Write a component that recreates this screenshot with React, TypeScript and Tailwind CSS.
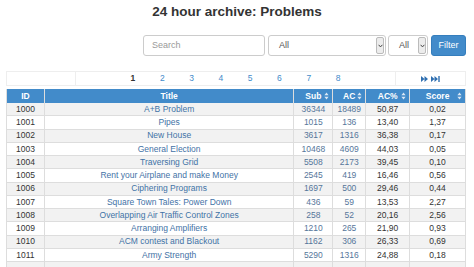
import React from "react";

type Row = [string, string, string, string, string, string];

const rows: Row[] = [
  ["1000", "A+B Problem", "36344", "18489", "50,87", "0,02"],
  ["1001", "Pipes", "1015", "136", "13,40", "1,37"],
  ["1002", "New House", "3617", "1316", "36,38", "0,17"],
  ["1003", "General Election", "10468", "4609", "44,03", "0,05"],
  ["1004", "Traversing Grid", "5508", "2173", "39,45", "0,10"],
  ["1005", "Rent your Airplane and make Money", "2545", "419", "16,46", "0,56"],
  ["1006", "Ciphering Programs", "1697", "500", "29,46", "0,44"],
  ["1007", "Square Town Tales: Power Down", "436", "59", "13,53", "2,27"],
  ["1008", "Overlapping Air Traffic Control Zones", "258", "52", "20,16", "2,56"],
  ["1009", "Arranging Amplifiers", "1210", "265", "21,90", "0,93"],
  ["1010", "ACM contest and Blackout", "1162", "306", "26,33", "0,69"],
  ["1011", "Army Strength", "5290", "1316", "24,88", "0,18"],
  ["1012", "", "", "", "", ""],
];

function SortIcon() {
  return (
    <svg width="5" height="8" viewBox="0 0 5 8" className="absolute right-[3px] top-1/2 -translate-y-1/2" aria-hidden="true">
      <path d="M2.5 0.5 L4.6 3.2 L0.4 3.2 Z" fill="#dbe8f5" />
      <path d="M2.5 7.5 L4.6 4.8 L0.4 4.8 Z" fill="#dbe8f5" />
    </svg>
  );
}

function SelectBox({ width, label }: { width: string; label: string }) {
  return (
    <div className={`${width} flex h-[21px] items-center rounded-[3px] border border-[#ccc] bg-white`}>
      <span className="flex-1 pl-[10px] text-[9px] text-[#555]">{label}</span>
      <span className="mr-[1px] flex h-[17px] w-[8px] items-center justify-center rounded-[2px] border border-[#bbb] bg-[#ececec]">
        <svg width="5" height="4" viewBox="0 0 5 4" aria-hidden="true">
          <path d="M0.6 0.8 L2.5 2.9 L4.4 0.8" fill="none" stroke="#444" strokeWidth="1" />
        </svg>
      </span>
    </div>
  );
}

export default function App() {
  const cell = "flex items-center justify-center border-r border-[#ddd] h-full";
  return (
    <div className="h-[267px] w-[474px] overflow-hidden bg-white font-['Liberation_Sans',Arial,sans-serif] text-[#333]">
      <h1 className="mt-[4px] text-center text-[13.5px] font-bold leading-[16px] text-[#333]">
        24 hour archive: Problems
      </h1>

      <div className="mt-[15px] flex justify-end gap-[2px] pr-[8px]">
        <div className="mr-[1px] flex h-[21px] w-[122px] items-center rounded-[3px] border border-[#ccc] bg-white pl-[8px] text-[9px] text-[#999]">
          Search
        </div>
        <SelectBox width="w-[118px]" label="All" />
        <SelectBox width="w-[40px]" label="All" />
        <button className="ml-[1px] h-[21px] w-[35px] rounded-[3px] border border-[#357ebd] bg-[#428bca] text-[9px] text-white">
          Filter
        </button>
      </div>

      <div className="mx-[6px] mt-[15px] flex h-[15px] w-[460px] border border-[#eee] text-[8.5px]">
        <div className="w-[69px] border-r border-[#eee]" />
        <div className="flex flex-1 items-center justify-center border-r border-[#eee]">
          {["1", "2", "3", "4", "5", "6", "7", "8"].map((n) => (
            <span
              key={n}
              className={`w-[29.3px] text-center ${n === "1" ? "font-bold text-[#333]" : "text-[#428bca]"}`}
            >
              {n}
            </span>
          ))}
        </div>
        <div className="flex w-[69px] items-center justify-center gap-[3px] text-[#428bca]">
          <svg width="7" height="6" viewBox="0 0 7 6" aria-hidden="true">
            <path d="M0 0 L3.5 3 L0 6 Z M3.5 0 L7 3 L3.5 6 Z" fill="#2f6fb0" />
          </svg>
          <svg width="9" height="6" viewBox="0 0 9 6" aria-hidden="true">
            <path d="M0 0 L3.5 3 L0 6 Z M3.5 0 L7 3 L3.5 6 Z" fill="#2f6fb0" />
            <rect x="7.3" y="0" width="1.4" height="6" fill="#2f6fb0" />
          </svg>
        </div>
      </div>

      <div className="mx-[6px] mt-[3px] w-[460px] border-l border-[#ddd] text-[8.5px]">
        <div className="flex h-[14px] bg-[#428bca] font-bold text-white">
          <div className={`${cell} w-[38px] border-[#6fa6d8]`}>ID</div>
          <div className={`${cell} w-[250px] border-[#6fa6d8]`}>Title</div>
          <div className={`${cell} relative w-[39px] border-[#6fa6d8]`}>
            Sub
            <SortIcon />
          </div>
          <div className={`${cell} relative w-[33px] border-[#6fa6d8]`}>
            AC
            <SortIcon />
          </div>
          <div className={`${cell} relative w-[44px] border-[#6fa6d8]`}>
            AC%
            <SortIcon />
          </div>
          <div className={`${cell} relative w-[56px] border-[#6fa6d8]`}>
            Score
            <SortIcon />
          </div>
        </div>
        {rows.map((r, i) => (
          <div
            key={r[0]}
            className={`flex h-[13.27px] border-b border-[#ddd] ${i % 2 === 0 ? "bg-[#f2f2f2]" : "bg-white"}`}
          >
            <div className={`${cell} w-[38px] text-[#333]`}>{i < 12 ? r[0] : ""}</div>
            <div className={`${cell} w-[250px] whitespace-nowrap text-[#3f72a6]`}>{r[1]}</div>
            <div className={`${cell} w-[39px] text-[#56769a]`}>{r[2]}</div>
            <div className={`${cell} w-[33px] text-[#56769a]`}>{r[3]}</div>
            <div className={`${cell} w-[44px] text-[#333]`}>{r[4]}</div>
            <div className={`${cell} w-[56px] text-[#333]`}>{r[5]}</div>
          </div>
        ))}
      </div>
    </div>
  );
}
